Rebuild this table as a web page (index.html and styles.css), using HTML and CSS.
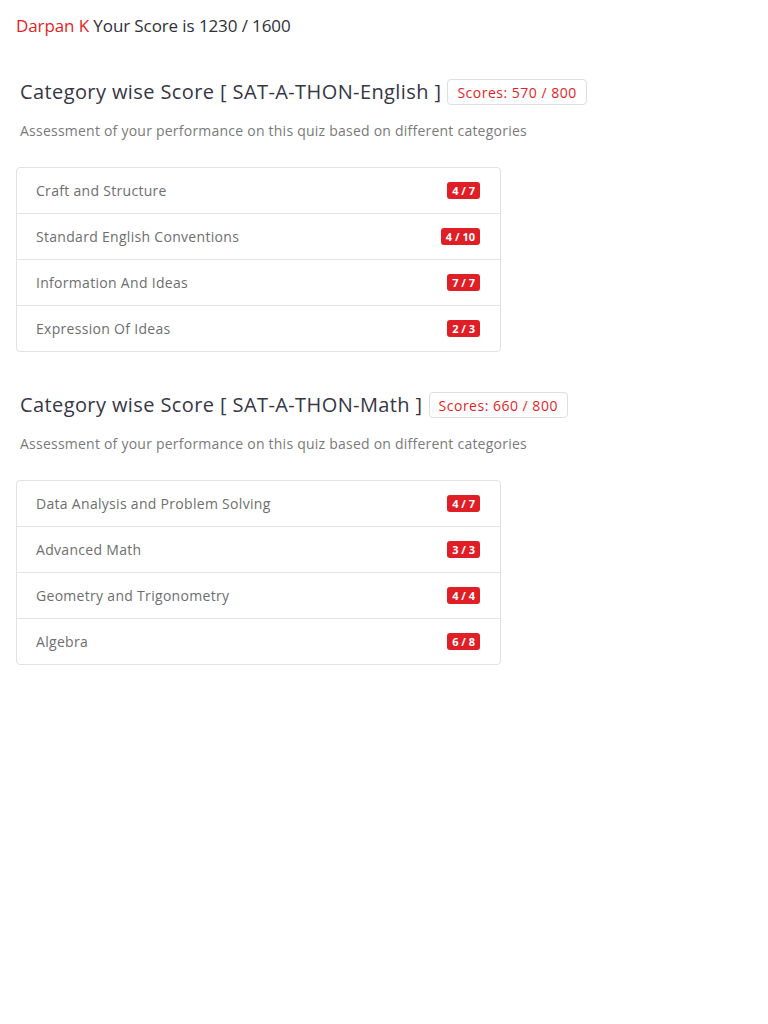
FILE: index.html
```html
<!DOCTYPE html>
<html>
<head>
<meta charset="utf-8">
<link rel="stylesheet" href="styles.css">
</head>
<body>
<div class="page">
  <div class="top"><span class="name">Darpan K</span> Your Score is 1230 / 1600</div>

  <section class="section first">
    <div class="head">
      <h2 class="title">Category wise Score [ SAT-A-THON-English ]</h2>
      <span class="total">Scores: 570 / 800</span>
    </div>
    <p class="desc">Assessment of your performance on this quiz based on different categories</p>
    <ul class="card">
      <li class="row"><span class="label">Craft and Structure</span><span class="pill">4 / 7</span></li>
      <li class="row"><span class="label">Standard English Conventions</span><span class="pill">4 / 10</span></li>
      <li class="row"><span class="label">Information And Ideas</span><span class="pill">7 / 7</span></li>
      <li class="row"><span class="label">Expression Of Ideas</span><span class="pill">2 / 3</span></li>
    </ul>
  </section>

  <section class="section">
    <div class="head">
      <h2 class="title">Category wise Score [ SAT-A-THON-Math ]</h2>
      <span class="total">Scores: 660 / 800</span>
    </div>
    <p class="desc">Assessment of your performance on this quiz based on different categories</p>
    <ul class="card">
      <li class="row"><span class="label">Data Analysis and Problem Solving</span><span class="pill">4 / 7</span></li>
      <li class="row"><span class="label">Advanced Math</span><span class="pill">3 / 3</span></li>
      <li class="row"><span class="label">Geometry and Trigonometry</span><span class="pill">4 / 4</span></li>
      <li class="row"><span class="label">Algebra</span><span class="pill">6 / 8</span></li>
    </ul>
  </section>
</div>
</body>
</html>
```

FILE: styles.css
```css
* { box-sizing: border-box; }
html, body { margin: 0; padding: 0; background: #fff; }
body { font-family: "Open Sans", "Noto Sans", sans-serif; color: #333; }

.page { padding: 12px 16px; }

.top {
  font-size: 17px;
  line-height: 28px;
  color: #2f2f3a;
  letter-spacing: -0.1px;
}
.name { color: #e41e26; }

.section { margin-top: 39px; }
.section.first { margin-top: 38px; }

.head {
  display: flex;
  align-items: center;
  gap: 6px;
  padding-left: 4px;
  height: 28px;
}
.title {
  margin: 0;
  font-size: 20px;
  font-weight: 400;
  color: #363645;
  line-height: 28px;
  letter-spacing: 0.4px;
  white-space: nowrap;
}
.total {
  display: inline-flex;
  align-items: center;
  height: 26px;
  padding: 0 9px;
  border: 1px solid #dedede;
  border-radius: 4px;
  color: #e41e26;
  font-size: 14px;
  letter-spacing: 0.5px;
}

.desc {
  margin: 15px 0 0;
  padding-left: 4px;
  font-size: 14px;
  line-height: 20px;
  color: #7a7a7a;
  letter-spacing: 0.23px;
}

.card {
  list-style: none;
  margin: 26px 0 0;
  padding: 0;
  width: 485px;
  border: 1px solid #e2e2e2;
  border-radius: 4px;
}
.row {
  display: flex;
  align-items: center;
  justify-content: space-between;
  height: 45px;
  padding: 0 20px 0 19px;
  font-size: 14px;
  color: #6e6e6e;
  letter-spacing: 0.3px;
}
.row + .row { border-top: 1px solid #e4e4e4; height: 46px; }

.pill {
  display: inline-flex;
  align-items: center;
  height: 17px;
  padding: 0 5px;
  border-radius: 3px;
  background: #e01e26;
  color: #fff;
  font-size: 11px;
  font-weight: 700;
  letter-spacing: 0;
}
```
